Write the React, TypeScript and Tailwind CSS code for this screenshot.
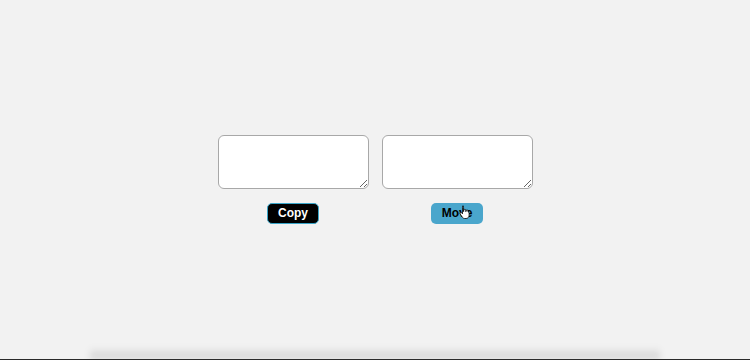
import React from "react";

function HandCursor() {
  return (
    <svg width="12" height="14" viewBox="0 0 12 14" className="absolute left-[28px] top-[2px]">
      <path
        d="M3.5 1.2c.6 0 1 .4 1 1V6.5h.3V5.3c0-.6.4-1 1-1s1 .4 1 1v1.3h.2V5.9c0-.6.4-1 1-1s1 .4 1 1v1h.1c.6 0 1 .4 1 1v2.3c0 1.7-1.2 3.3-3 3.3H5.6c-1 0-1.7-.5-2.3-1.3L1.2 9c-.3-.5-.2-1.1.3-1.4.5-.3 1-.1 1.3.3l.7.9V2.2c0-.6.4-1 1-1z"
        fill="#ffffff"
        stroke="#000000"
        strokeWidth="0.8"
        strokeLinejoin="round"
      />
    </svg>
  );
}

export default function App() {
  return (
    <div className="relative flex h-[360px] w-full items-center justify-center overflow-hidden bg-[#f2f2f2] font-['Liberation_Sans',Arial,sans-serif]">
      <div className="flex gap-[13px] pb-[2px]">
        {/* Copy column */}
        <div className="flex flex-col items-center gap-[14px]">
          <textarea className="block h-[54px] w-[151px] rounded-[6px] border border-[#a8a8a8] bg-white" />
          <button className="flex h-[21px] w-[52px] items-center justify-center rounded-[5px] border border-[#3aa6c9] bg-black text-[12px] font-bold leading-none text-white">
            Copy
          </button>
        </div>

        {/* Move column */}
        <div className="flex flex-col items-center gap-[14px]">
          <textarea className="block h-[54px] w-[151px] rounded-[6px] border border-[#a8a8a8] bg-white" />
          <div className="relative flex">
            <button className="flex h-[21px] w-[52px] items-center justify-center rounded-[5px] bg-[#4aa6cc] text-[12px] font-bold leading-none text-black">
              Move
            </button>
            <HandCursor />
          </div>
        </div>
      </div>

      {/* window bottom shadow */}
      <div className="absolute bottom-[1px] left-[90px] right-[90px] h-[12px] bg-gradient-to-b from-transparent to-black/15 blur-[3px]" />
      <div className="absolute bottom-0 left-0 right-0 h-[1px] bg-[#2a2a2a]" />
    </div>
  );
}
